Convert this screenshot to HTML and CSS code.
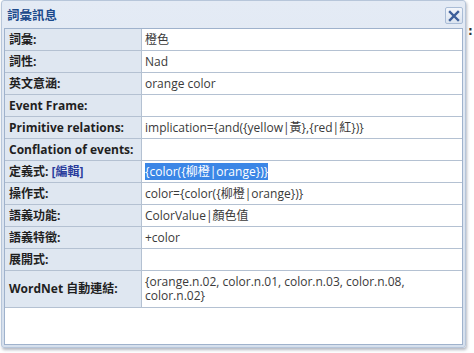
FILE: index.html
```html
<!DOCTYPE html>
<html>
<head>
<meta charset="utf-8">
<link rel="stylesheet" href="styles.css">
</head>
<body>
<div class="backdrop">
  <div class="window">
    <div class="header">
      <span class="title">詞彙訊息</span>
      <span class="close"><svg width="14" height="14" viewBox="0 0 14 14"><path d="M3 3 L11 11 M11 3 L3 11" stroke="#3d5f9a" stroke-width="2.4" stroke-linecap="square"/></svg></span>
    </div>
    <div class="body">
      <table class="info">
        <tr><th>詞彙:</th><td>橙色</td></tr>
        <tr><th>詞性:</th><td>Nad</td></tr>
        <tr><th>英文意涵:</th><td>orange color</td></tr>
        <tr><th>Event Frame:</th><td></td></tr>
        <tr><th>Primitive relations:</th><td>implication={and({yellow|黃},{red|紅})}</td></tr>
        <tr><th>Conflation of events:</th><td></td></tr>
        <tr><th>定義式: <a class="edit">[編輯]</a></th><td><span class="sel">{color({柳橙|orange})}</span></td></tr>
        <tr><th>操作式:</th><td>color={color({柳橙|orange})}</td></tr>
        <tr><th>語義功能:</th><td>ColorValue|顏色值</td></tr>
        <tr><th>語義特徵:</th><td>+color</td></tr>
        <tr><th>展開式:</th><td></td></tr>
        <tr class="tall"><th>WordNet 自動連結:</th><td>{orange.n.02, color.n.01, color.n.03, color.n.08, color.n.02}</td></tr>
      </table>
    </div>
  </div>
  <span class="behind">:</span>
</div>
</body>
</html>
```
FILE: styles.css
```css
html, body {
  margin: 0;
  padding: 0;
  background: #ffffff;
}
.backdrop {
  width: 474px;
  height: 353px;
  position: relative;
  background: #ffffff;
  overflow: hidden;
}
.window {
  width: 465px;
  height: 348px;
  margin-left: 1px;
  background: linear-gradient(#e4ebf5, #d6e0ed);
  border: 1px solid #b7c6da;
  border-radius: 3px;
  box-shadow: 1px 2px 3px rgba(90, 100, 120, 0.45);
  display: flex;
  flex-direction: column;
  padding: 0 2px 2px 2px;
  box-sizing: border-box;
  font-family: "Open Sans", "Noto Sans CJK TC", sans-serif;
}
.header {
  height: 27px;
  display: flex;
  align-items: center;
  justify-content: space-between;
  padding: 0 0 0 3px;
}
.title {
  color: #1d4a8c;
  font-weight: bold;
  font-size: 12.5px;
}
.close {
  width: 16px;
  height: 15px;
  border: 1px solid #a9bcd6;
  border-radius: 2px;
  background: linear-gradient(#f3f6fb, #dbe4f0);
  display: flex;
  align-items: center;
  justify-content: center;
  margin-top: 2px;
}
.body {
  flex: 1;
  background: #ffffff;
  border: 1px solid #9fb2cc;
}
.info {
  width: 100%;
  border-collapse: collapse;
  font-size: 12px;
}
.info th, .info td {
  border: 1px solid #b4c1d2;
  height: 21px;
  padding: 0 3px;
  text-align: left;
  vertical-align: middle;
  line-height: 14px;
}
.info tr:first-child th, .info tr:first-child td { border-top: none; }
.info th {
  border-left: none;
  width: 129px;
  background: #dfe7f1;
  color: #1f1f1f;
  font-weight: bold;
  white-space: nowrap;
  padding-left: 4px;
}
.info td {
  border-right: none;
  color: #3a3a3a;
  padding-left: 3px;
}
.info tr.tall th, .info tr.tall td { height: 36px; }
.edit {
  color: #2a3c9c;
}
.sel {
  background: #3b86e6;
  color: #ffffff;
}
.behind {
  position: absolute;
  left: 468px;
  top: 24px;
  font: bold 12px "DejaVu Sans", sans-serif;
  color: #333;
}
```
